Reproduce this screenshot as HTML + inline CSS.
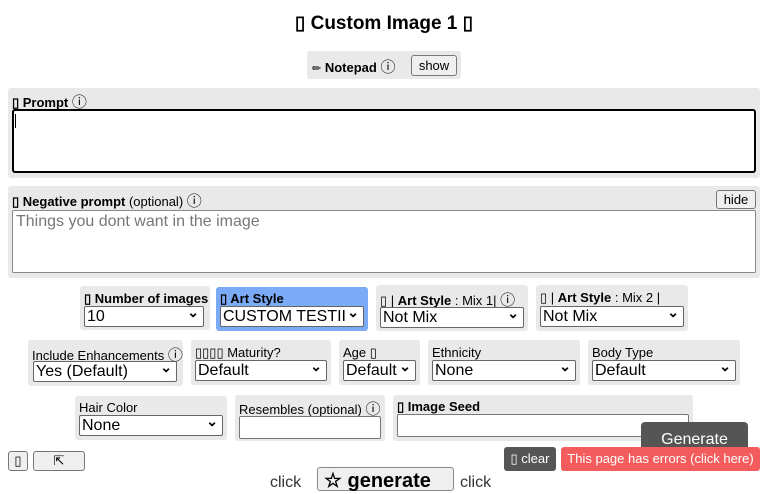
<!DOCTYPE html>
<html><head><meta charset="utf-8"><style>
*{box-sizing:border-box}
body{margin:0;width:768px;height:480px;overflow:hidden;background:#fff;font-family:"Liberation Sans",sans-serif;font-size:13px;color:#000;position:relative}
.a{position:absolute}
.box{position:absolute;background:#e9e9e9;border-radius:3px}
.sel{position:absolute;height:21px;border:1px solid #666;border-radius:2px;background:#fff;font-size:16px;line-height:19px;padding-left:2px;white-space:nowrap;overflow:hidden}
.sel:after{content:"⌄";position:absolute;right:4px;top:-4px;font-size:14px;font-weight:bold}
.inp{position:absolute;height:23px;border:1px solid #777;border-radius:2px;background:#fff}
.btn{position:absolute;border:1px solid #777;border-radius:3px;background:#efefef;font-size:13px;text-align:center}
.i{font-size:15px}
</style></head><body>
<div class="a" style="left:0;width:768px;top:12px;text-align:center;font-weight:bold;font-size:19px">▯ Custom Image 1 ▯</div>
<div class="box" style="left:307px;top:51px;width:154px;height:28px"></div>
<div class="a" style="left:312px;top:56px"><span style="font-size:11px">✏</span> <b>Notepad</b> <span class="i">ⓘ</span></div>
<div class="btn" style="left:411px;top:55px;width:46px;height:21px;line-height:19px">show</div>

<div class="box" style="left:8px;top:88px;width:752px;height:90px"></div>
<div class="a" style="left:12px;top:91px"><b>▯ Prompt</b> <span class="i">ⓘ</span></div>
<div class="a" style="left:12px;top:109px;width:744px;height:64px;border:2px solid #000;border-radius:3px;background:#fff"></div>
<div class="a" style="left:15px;top:114px;width:1px;height:14px;background:#000"></div>

<div class="box" style="left:8px;top:186px;width:752px;height:92px"></div>
<div class="a" style="left:12px;top:190px"><b>▯ Negative prompt</b> (optional) <span class="i">ⓘ</span></div>
<div class="btn" style="left:716px;top:190px;width:40px;height:19px;line-height:17px">hide</div>
<div class="a" style="left:12px;top:210px;width:744px;height:63px;border:1px solid #888;border-radius:2px;background:#fff;color:#777;font-size:16px;padding:2px 3px">Things you dont want in the image</div>

<div class="box" style="left:80px;top:286px;width:130px;height:44px"></div>
<div class="a" style="left:84px;top:291px"><b>▯ Number of images</b></div>
<div class="sel" style="left:84px;top:306px;width:120px">10</div>
<div class="box" style="left:216px;top:287px;width:152px;height:44px;background:#7baaf7"></div>
<div class="a" style="left:220px;top:291px"><b>▯ Art Style</b></div>
<div class="sel" style="left:220px;top:306px;width:144px;padding-right:14px">CUSTOM TESTII</div>
<div class="box" style="left:376px;top:285px;width:152px;height:46px"></div>
<div class="a" style="left:380px;top:289px">▯ | <b>Art Style</b> : Mix 1| <span class="i">ⓘ</span></div>
<div class="sel" style="left:380px;top:307px;width:144px">Not Mix</div>
<div class="box" style="left:536px;top:285px;width:152px;height:46px"></div>
<div class="a" style="left:540px;top:290px">▯ | <b>Art Style</b> : Mix 2 |</div>
<div class="sel" style="left:540px;top:306px;width:144px">Not Mix</div>

<div class="box" style="left:28px;top:340px;width:155px;height:46px"></div>
<div class="a" style="left:32px;top:344px">Include Enhancements <span class="i">ⓘ</span></div>
<div class="sel" style="left:33px;top:361px;width:144px">Yes (Default)</div>
<div class="box" style="left:191px;top:340px;width:140px;height:45px"></div>
<div class="a" style="left:195px;top:345px">▯▯▯▯ Maturity?</div>
<div class="sel" style="left:195px;top:360px;width:132px">Default</div>
<div class="box" style="left:339px;top:340px;width:81px;height:45px"></div>
<div class="a" style="left:343px;top:345px">Age ▯</div>
<div class="sel" style="left:343px;top:360px;width:73px;padding-right:12px">Default</div>
<div class="box" style="left:428px;top:340px;width:152px;height:45px"></div>
<div class="a" style="left:432px;top:345px">Ethnicity</div>
<div class="sel" style="left:432px;top:360px;width:144px">None</div>
<div class="box" style="left:588px;top:340px;width:152px;height:45px"></div>
<div class="a" style="left:592px;top:345px">Body Type</div>
<div class="sel" style="left:592px;top:360px;width:144px">Default</div>

<div class="box" style="left:75px;top:396px;width:152px;height:44px"></div>
<div class="a" style="left:79px;top:400px">Hair Color</div>
<div class="sel" style="left:79px;top:415px;width:144px">None</div>
<div class="box" style="left:235px;top:395px;width:150px;height:46px"></div>
<div class="a" style="left:239px;top:398px">Resembles (optional) <span class="i">ⓘ</span></div>
<div class="inp" style="left:239px;top:416px;width:142px"></div>
<div class="box" style="left:393px;top:395px;width:300px;height:46px"></div>
<div class="a" style="left:397px;top:399px"><b>▯ Image Seed</b></div>
<div class="inp" style="left:397px;top:414px;width:292px"></div>

<div class="btn" style="left:8px;top:451px;width:20px;height:20px;line-height:18px">▯</div>
<div class="btn" style="left:33px;top:451px;width:52px;height:20px;line-height:18px">⇱</div>
<div class="a" style="left:641px;top:422px;width:107px;height:36px;background:#555;border-radius:4px;color:#fff;font-size:16px;text-align:center;line-height:36px">Generate</div>
<div class="a" style="left:504px;top:447px;width:52px;height:24px;background:#555;border-radius:3px;color:#fff;text-align:center;line-height:24px">▯ clear</div>
<div class="a" style="left:561px;top:447px;width:199px;height:24px;background:#f25c5c;border-radius:3px;color:#fff;text-align:center;line-height:24px">This page has errors (click here)</div>
<div class="a" style="left:270px;top:474px;font-size:16px;color:#333">click</div>
<div class="a" style="left:317px;top:467px;width:137px;height:24px;border:1px solid #888;border-radius:3px;background:#efefef;font-size:20px;font-weight:bold;padding-left:6px;line-height:26px">☆ generate</div>
<div class="a" style="left:460px;top:474px;font-size:16px;color:#333">click</div>
</body></html>
